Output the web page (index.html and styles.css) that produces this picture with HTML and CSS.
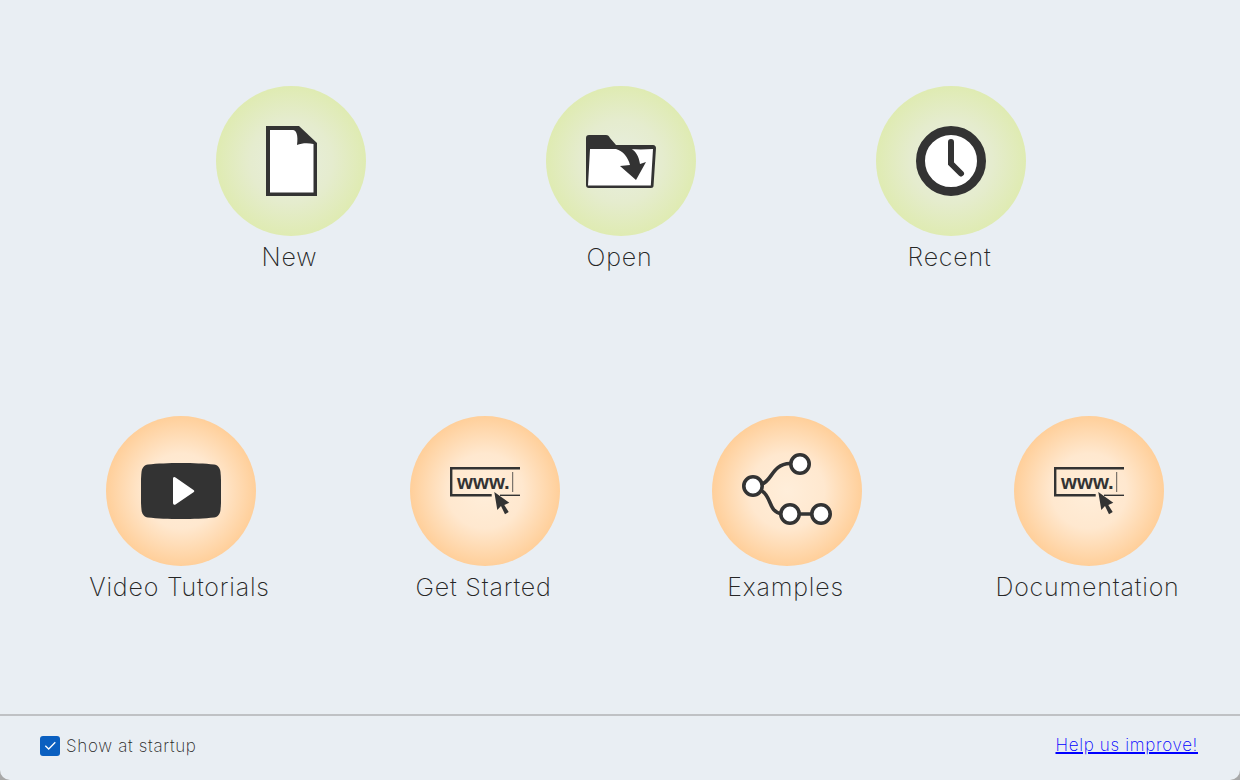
FILE: index.html
```html
<!DOCTYPE html>
<html lang="en">
<head>
    <meta charset="UTF-8">
    <title>Start</title>
    <link rel="stylesheet" href="styles.css">
</head>
<body>
    <div class="dialog">
        <main class="actions">
            <div class="row row-start">
                <a class="action">
                    <span class="disc disc-green">
                        <svg viewBox="0 0 51 70" width="51" height="70">
                            <path d="M0 0H33L51 17V70H0Z" fill="#333"/>
                            <path d="M4 4H27C30 4 32.500 9 31 19C36 17 42 17 47.500 18V66.500H4Z" fill="#fff"/>
                        </svg>
                    </span>
                    <span class="label">New</span>
                </a>
                <a class="action">
                    <span class="disc disc-green">
                        <svg viewBox="0 0 70 53" width="70" height="53">
                            <path d="M0 3C0 1 1 0 3 0H20C22 0 23 1 24 3L30 10H67C69 10 70 11.500 70 13L67.500 51C67.500 52 66.500 53 65 53H3C1 53 0 52 0 50Z" fill="#333"/>
                            <path d="M4 14H31C42 14 55 15 67 14L64.800 50.500L2 50.500Z" fill="#fff"/>
                            <path d="M30 12H42C50 15 53 22 54 29L60 27L50 45L34 31L44 30C42 22 37 16 30 14Z" fill="#333"/>
                        </svg>
                    </span>
                    <span class="label">Open</span>
                </a>
                <a class="action">
                    <span class="disc disc-green">
                        <svg viewBox="0 0 70 70" width="70" height="70">
                            <circle cx="35" cy="35" r="30.500" fill="#fff" stroke="#333" stroke-width="9"/>
                            <path d="M35 16V37.500L45 47.500" fill="none" stroke="#333" stroke-width="6" stroke-linecap="round"/>
                        </svg>
                    </span>
                    <span class="label">Recent</span>
                </a>
            </div>
            <div class="row row-help">
                <a class="action">
                    <span class="disc disc-orange">
                        <svg viewBox="0 0 80 56" width="80" height="56">
                            <path d="M7 1.500C25 -.5 55 -.5 73 1.500C77 2 79 5 79.500 9C80.500 20 80.500 36 79.500 47C79 51 77 54 73 54.500C55 56.500 25 56.500 7 54.500C3 54 1 51 .5 47C-.5 36 -.5 20 .5 9C1 5 3 2 7 1.500Z" fill="#333"/>
                            <path d="M32 15.500C32 14 33.500 13.500 34.500 14.500L52.500 27C53.500 27.800 53.500 28.600 52.500 29.300L34.500 41.500C33.500 42.300 32 41.500 32 40Z" fill="#fff"/>
                        </svg>
                    </span>
                    <span class="label">Video Tutorials</span>
                </a>
                <a class="action">
                    <span class="disc disc-orange">
                        <svg viewBox="0 0 70 48" width="70" height="48">
                            <path d="M70 1.200H1.200V28.300H41.700" fill="none" stroke="#333" stroke-width="2.400"/>
                            <path d="M50 28.300H70" fill="none" stroke="#333" stroke-width="1.400"/>
                            <path d="M62.700 5V25" fill="none" stroke="#333" stroke-width=".8"/>
                            <text x="7" y="21.700" class="www">www.</text>
                            <path d="M44.300 25L47.300 43L51 39L55 47.300L58.700 45L54.300 38L59.300 35.700Z" fill="#333"/>
                        </svg>
                    </span>
                    <span class="label">Get Started</span>
                </a>
                <a class="action">
                    <span class="disc disc-orange">
                        <svg viewBox="0 0 90 80" width="90" height="80">
                            <path d="M20 33C30 30 30 13 48 12.500M20 40C30 46 26 61 40 63H79" fill="none" stroke="#333" stroke-width="3.600"/>
                            <circle cx="11" cy="35" r="9.200" fill="#fff" stroke="#333" stroke-width="3.600"/>
                            <circle cx="58" cy="13" r="9.200" fill="#fff" stroke="#333" stroke-width="3.600"/>
                            <circle cx="48" cy="63" r="9.200" fill="#fff" stroke="#333" stroke-width="3.600"/>
                            <circle cx="79" cy="63" r="9.200" fill="#fff" stroke="#333" stroke-width="3.600"/>
                        </svg>
                    </span>
                    <span class="label">Examples</span>
                </a>
                <a class="action">
                    <span class="disc disc-orange">
                        <svg viewBox="0 0 70 48" width="70" height="48">
                            <path d="M70 1.200H1.200V28.300H41.700" fill="none" stroke="#333" stroke-width="2.400"/>
                            <path d="M50 28.300H70" fill="none" stroke="#333" stroke-width="1.400"/>
                            <path d="M62.700 5V25" fill="none" stroke="#333" stroke-width=".8"/>
                            <text x="7" y="21.700" class="www">www.</text>
                            <path d="M44.300 25L47.300 43L51 39L55 47.300L58.700 45L54.300 38L59.300 35.700Z" fill="#333"/>
                        </svg>
                    </span>
                    <span class="label">Documentation</span>
                </a>
            </div>
        </main>
        <footer class="footer">
            <label class="startup">
                <span class="check">
                    <svg viewBox="0 0 20 20" width="20" height="20">
                        <path d="M5.300 9.800L8.700 13L15.300 6.300" fill="none" stroke="#fff" stroke-width="1.300"/>
                    </svg>
                </span>
                Show at startup
            </label>
            <a class="improve" href="#">Help us improve!</a>
        </footer>
    </div>
</body>
</html>
```
FILE: styles.css
```css
html, body {
  margin: 0;
  padding: 0;
  height: 100%;
  background: #a8a8a8;
}
body {
  font-family: Inter, 'Liberation Sans', sans-serif;
  font-weight: 200;
  color: #262626;
}
.dialog {
  height: 780px;
  background: #e9eef3;
  border-radius: 0 0 10px 10px;
  display: flex;
  flex-direction: column;
  overflow: hidden;
}
.actions {
  flex: 1;
  padding-top: 86px;
}
.row {
  display: flex;
}
.row-start {
  padding-left: 216px;
  gap: 180px;
  margin-bottom: 137px;
}
.row-help {
  padding-left: 106px;
  gap: 152px;
}
.row-help .action:first-child {
  margin-right: 2px;
}
.action {
  width: 150px;
  display: flex;
  flex-direction: column;
  align-items: center;
  cursor: pointer;
}
.disc {
  width: 150px;
  height: 150px;
  border-radius: 50%;
  display: flex;
  align-items: center;
  justify-content: center;
  flex-shrink: 0;
}
.disc-green {
  background: radial-gradient(circle closest-side, #e8eee0 0%, #e5ecce 55%, #dfebb2 100%);
}
.disc-orange {
  background: radial-gradient(circle closest-side, #ffeeda 0%, #ffe8cf 50%, #ffcf9a 100%);
}
.label {
  font-size: 25px;
  line-height: 43px;
  letter-spacing: .8px;
  white-space: nowrap;
  margin-left: -3px;
}
.www {
  font-family: 'Liberation Sans', sans-serif;
  font-size: 20.500px;
  font-weight: 700;
  letter-spacing: 0;
  fill: #333;
}
.footer {
  height: 66px;
  box-sizing: border-box;
  border-top: 2px solid #bfc1c4;
  display: flex;
  align-items: center;
  justify-content: space-between;
  padding: 0 42px 4px 40px;
  font-size: 17px;
  letter-spacing: .68px;
}
.startup {
  display: flex;
  align-items: center;
  gap: 6px;
}
.check {
  width: 20px;
  height: 20px;
  border-radius: 3px;
  background: #0a5fc0;
  display: block;
}
.check svg {
  display: block;
}
.improve {
  color: #0000ff;
  margin-bottom: 3px;
  text-decoration-thickness: 2px;
}
```
